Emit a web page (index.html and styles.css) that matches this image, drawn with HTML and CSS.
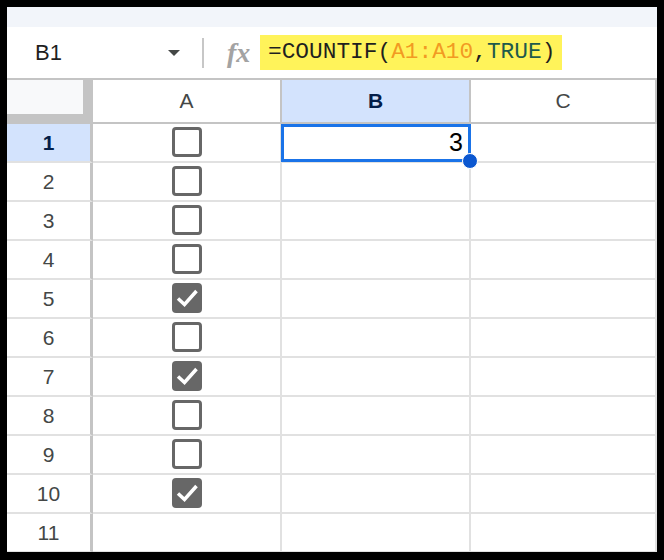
FILE: index.html
```html
<!DOCTYPE html>
<html lang="en">
<head>
    <meta charset="UTF-8">
    <meta name="viewport" content="width=device-width, initial-scale=1.0">
    <title>COUNTIF checkboxes</title>
    <link rel="stylesheet" href="styles.css">
</head>
<body>
    <div class="frame">
        <div class="top-strip"></div>

        <div class="formula-bar">
            <span class="cell-ref">B1</span>
            <span class="caret"></span>
            <span class="divider"></span>
            <span class="fx">fx</span>
            <div class="formula"><span>=COUNTIF(</span><span class="ref">A1:A10</span><span>,</span><span class="bool">TRUE</span><span>)</span></div>
        </div>

        <div class="grid">
            <div class="corner"></div>
            <div class="col-head">A</div>
            <div class="col-head active">B</div>
            <div class="col-head">C</div>

            <div class="row-head active">1</div>
            <div class="cell"><span class="box"></span></div>
            <div class="cell value selected">3<span class="handle"></span></div>
            <div class="cell"></div>

            <div class="row-head">2</div>
            <div class="cell"><span class="box"></span></div>
            <div class="cell"></div>
            <div class="cell"></div>

            <div class="row-head">3</div>
            <div class="cell"><span class="box"></span></div>
            <div class="cell"></div>
            <div class="cell"></div>

            <div class="row-head">4</div>
            <div class="cell"><span class="box"></span></div>
            <div class="cell"></div>
            <div class="cell"></div>

            <div class="row-head">5</div>
            <div class="cell"><span class="box checked"><svg viewBox="0 0 30 30"><polyline points="6,15.5 12.5,21.5 24.5,8"/></svg></span></div>
            <div class="cell"></div>
            <div class="cell"></div>

            <div class="row-head">6</div>
            <div class="cell"><span class="box"></span></div>
            <div class="cell"></div>
            <div class="cell"></div>

            <div class="row-head">7</div>
            <div class="cell"><span class="box checked"><svg viewBox="0 0 30 30"><polyline points="6,15.5 12.5,21.5 24.5,8"/></svg></span></div>
            <div class="cell"></div>
            <div class="cell"></div>

            <div class="row-head">8</div>
            <div class="cell"><span class="box"></span></div>
            <div class="cell"></div>
            <div class="cell"></div>

            <div class="row-head">9</div>
            <div class="cell"><span class="box"></span></div>
            <div class="cell"></div>
            <div class="cell"></div>

            <div class="row-head">10</div>
            <div class="cell"><span class="box checked"><svg viewBox="0 0 30 30"><polyline points="6,15.5 12.5,21.5 24.5,8"/></svg></span></div>
            <div class="cell"></div>
            <div class="cell"></div>

            <div class="row-head">11</div>
            <div class="cell"></div>
            <div class="cell"></div>
            <div class="cell"></div>
        </div>
    </div>
</body>
</html>
```

FILE: styles.css
```css
body {
    margin: 0;
    padding: 7px;
    background-color: #000;
    font-family: 'Liberation Sans', Arial, sans-serif;
    color: #444746;
}
.frame {
    width: 650px;
    height: 545px;
    background: #fff;
    overflow: hidden;
}
.top-strip {
    height: 20px;
    background-color: #f2f5fa;
}
.formula-bar {
    display: flex;
    align-items: center;
    height: 51px;
    padding-left: 28px;
}
.cell-ref {
    width: 133px;
    font-size: 22px;
    color: #1f1f1f;
}
.caret {
    width: 0;
    height: 0;
    border-left: 6.5px solid transparent;
    border-right: 6.5px solid transparent;
    border-top: 6px solid #444746;
}
.divider {
    width: 2px;
    height: 30px;
    margin-left: 22px;
    background-color: #c7c7c7;
}
.fx {
    width: 33px;
    margin-left: 23px;
    font-family: 'Liberation Serif', serif;
    font-style: italic;
    font-weight: bold;
    font-size: 28px;
    color: #a3a3a3;
}
.formula {
    height: 35px;
    line-height: 35px;
    padding: 0 7px 0 8px;
    background-color: #fff35a;
    font-family: 'Liberation Mono', monospace;
    font-size: 22.8px;
    color: #1f1f1f;
    white-space: nowrap;
}
.formula .ref {
    color: #f29a22;
}
.formula .bool {
    color: #1f5a4c;
}
.grid {
    display: grid;
    grid-template-columns: 86px 189px 189px 1fr;
    grid-template-rows: 46px repeat(11, 39px);
    font-size: 21px;
}
.corner {
    box-sizing: border-box;
    background-color: #f8f9fa;
    border-top: 2px solid #c4c4c4;
    border-right: 10px solid #c4c4c4;
    border-bottom: 10px solid #c4c4c4;
}
.col-head {
    box-sizing: border-box;
    display: flex;
    align-items: center;
    justify-content: center;
    border-top: 2px solid #c4c4c4;
    border-bottom: 2px solid #c4c4c4;
    border-right: 2px solid #c4c4c4;
}
.col-head.active,
.row-head.active {
    background-color: #d3e3fd;
    color: #041e49;
    font-weight: bold;
}
.row-head {
    box-sizing: border-box;
    display: flex;
    align-items: center;
    justify-content: center;
    border-right: 3px solid #c4c4c4;
    border-bottom: 2px solid #e1e1e1;
}
.cell {
    box-sizing: border-box;
    display: flex;
    align-items: center;
    justify-content: center;
    border-right: 2px solid #e1e1e1;
    border-bottom: 2px solid #e1e1e1;
}
.cell.value {
    justify-content: flex-end;
    padding-right: 6px;
    font-size: 25px;
    color: #000;
}
.selected {
    position: relative;
}
.selected::after {
    content: '';
    position: absolute;
    top: 0;
    left: -1px;
    right: -2px;
    bottom: -1px;
    border: 3px solid #1a73e8;
}
.handle {
    position: absolute;
    right: -9px;
    bottom: -8px;
    width: 14px;
    height: 14px;
    border: 1px solid #fff;
    border-radius: 50%;
    background-color: #0b57d0;
    z-index: 1;
}
.box {
    box-sizing: border-box;
    width: 30px;
    height: 30px;
    margin-top: -1px;
    border: 3.5px solid #676767;
    border-radius: 4px;
}
.box.checked {
    border: none;
    background-color: #676767;
}
.box svg {
    display: block;
    width: 30px;
    height: 30px;
    fill: none;
    stroke: #fff;
    stroke-width: 3.5;
}
```
